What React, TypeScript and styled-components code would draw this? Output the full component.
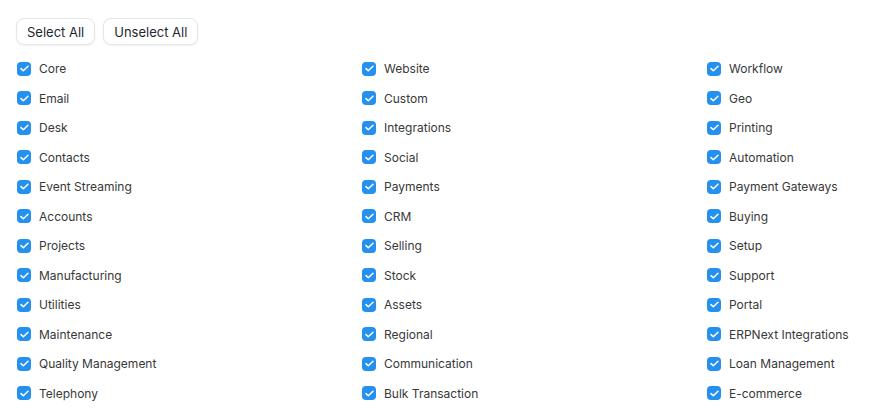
import React from 'react';
import styled, { createGlobalStyle } from 'styled-components';

const GlobalStyle = createGlobalStyle`
  html, body {
    margin: 0;
    padding: 0;
    background: #ffffff;
    overflow: hidden;
  }
  body {
    font-family: Inter, "Noto Sans", sans-serif;
    color: #383838;
    -webkit-font-smoothing: antialiased;
  }
`;

const Page = styled.div`
  padding: 18px 16px 0 16px;
`;

const Toolbar = styled.div`
  display: flex;
  gap: 8px;
  margin-bottom: 9px;
`;

const Button = styled.button`
  font-family: inherit;
  font-size: 13px;
  color: #1f272e;
  background: #ffffff;
  border: 1px solid #e2e6e9;
  border-radius: 8px;
  box-shadow: 0 1px 2px rgba(0, 0, 0, 0.06);
  height: 27px;
  padding: 0 10px;
  cursor: pointer;
`;

const Grid = styled.div`
  display: grid;
  grid-template-columns: 345px 345px 1fr;
  grid-auto-rows: 29.5px;
`;

const Item = styled.label`
  display: flex;
  align-items: center;
  gap: 8px;
  font-size: 12px;
  color: #383838;
  padding-left: 1px;
  white-space: nowrap;
`;

const Box = styled.span<{ $checked: boolean }>`
  width: 14px;
  height: 14px;
  border-radius: 4px;
  background: ${(p) => (p.$checked ? '#2490ef' : '#ffffff')};
  border: ${(p) => (p.$checked ? 'none' : '1px solid #c0c6cc')};
  display: flex;
  align-items: center;
  justify-content: center;
  flex-shrink: 0;
`;

const columns = [
  ['Core', 'Email', 'Desk', 'Contacts', 'Event Streaming', 'Accounts', 'Projects', 'Manufacturing', 'Utilities', 'Maintenance', 'Quality Management', 'Telephony'],
  ['Website', 'Custom', 'Integrations', 'Social', 'Payments', 'CRM', 'Selling', 'Stock', 'Assets', 'Regional', 'Communication', 'Bulk Transaction'],
  ['Workflow', 'Geo', 'Printing', 'Automation', 'Payment Gateways', 'Buying', 'Setup', 'Support', 'Portal', 'ERPNext Integrations', 'Loan Management', 'E-commerce'],
];

const rows = columns[0].map((_, i) => columns.map((c) => c[i])).flat();

function Check() {
  return (
    <svg width="9" height="7" viewBox="0 0 9 7" fill="none">
      <path d="M1 3.6L3.3 5.8L8 1.2" stroke="#ffffff" strokeWidth="1.5" strokeLinecap="round" strokeLinejoin="round" />
    </svg>
  );
}

export default function App() {
  return (
    <Page>
      <GlobalStyle />
      <Toolbar>
        <Button>Select All</Button>
        <Button>Unselect All</Button>
      </Toolbar>
      <Grid>
        {rows.map((name) => (
          <Item key={name}>
            <Box $checked>
              <Check />
            </Box>
            {name}
          </Item>
        ))}
      </Grid>
    </Page>
  );
}
